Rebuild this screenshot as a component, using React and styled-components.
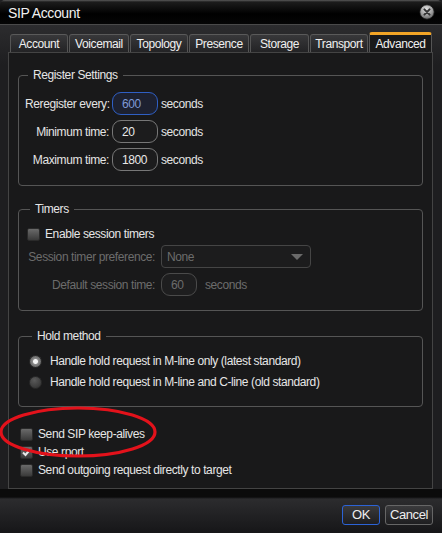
import styled, { createGlobalStyle } from "styled-components";

const Global = createGlobalStyle`
  html, body {
    margin: 0;
    padding: 0;
    background: #000;
  }
  body {
    font-family: "Liberation Sans", Arial, sans-serif;
    font-size: 12px;
    line-height: 14px;
    letter-spacing: -0.4px;
  }
`;

const tabs = [
  { label: "Account", width: 58 },
  { label: "Voicemail", width: 60 },
  { label: "Topology", width: 58 },
  { label: "Presence", width: 60 },
  { label: "Storage", width: 59 },
  { label: "Transport", width: 58 },
  { label: "Advanced", width: 63, active: true },
];

const CloseIcon = () => (
  <svg width="16" height="16" viewBox="0 0 16 16">
    <defs>
      <radialGradient id="cg" cx="0.45" cy="0.3" r="0.75">
        <stop offset="0" stopColor="#e2e2e2" />
        <stop offset="0.6" stopColor="#9a9a9a" />
        <stop offset="1" stopColor="#5a5a5a" />
      </radialGradient>
    </defs>
    <circle cx="8" cy="8" r="7.2" fill="url(#cg)" stroke="#1a1a1a" strokeWidth="0.8" />
    <path d="M5.4 5.4 L10.6 10.6 M10.6 5.4 L5.4 10.6" stroke="#333" strokeWidth="2" strokeLinecap="round" />
  </svg>
);

const Checkbox = ({ checked }) => (
  <Box>
    {checked && (
      <svg width="11" height="11" viewBox="0 0 11 11">
        <path d="M2 5.5 L4.5 8 L9 2.5" stroke="#e8e8e8" strokeWidth="2" fill="none" />
      </svg>
    )}
  </Box>
);

export default function App() {
  return (
    <>
      <Global />
      <Dialog>
        <TitleBar>
          <Title>SIP Account</Title>
          <CloseIcon />
        </TitleBar>
        <Body>
          <TabRow>
            {tabs.map((t) => (
              <Tab key={t.label} $w={t.width} $active={t.active}>
                {t.label}
              </Tab>
            ))}
          </TabRow>
          <Panel>
            <Group>
              <Legend>Register Settings</Legend>
              <FieldList>
                <FieldRow>
                  <FieldLabel $w={84}>Reregister every:</FieldLabel>
                  <Input $w={46} $focus>600</Input>
                  <Unit>seconds</Unit>
                </FieldRow>
                <FieldRow>
                  <FieldLabel $w={84}>Minimum time:</FieldLabel>
                  <Input $w={46}>20</Input>
                  <Unit>seconds</Unit>
                </FieldRow>
                <FieldRow>
                  <FieldLabel $w={84}>Maximum time:</FieldLabel>
                  <Input $w={46}>1800</Input>
                  <Unit>seconds</Unit>
                </FieldRow>
              </FieldList>
            </Group>

            <Group $top={16} $pt={10} $pl={8}>
              <Legend>Timers</Legend>
              <CheckRow>
                <Checkbox />
                <span>Enable session timers</span>
              </CheckRow>
              <FieldList $top={3} $gap={5}>
                <FieldRow $gap={6}>
                  <FieldLabel $w={128} $disabled>Session timer preference:</FieldLabel>
                  <Select>
                    <span>None</span>
                    <Caret />
                  </Select>
                </FieldRow>
                <FieldRow $gap={6}>
                  <FieldLabel $w={128} $disabled>Default session time:</FieldLabel>
                  <Input $w={36} $disabled>60</Input>
                  <Unit $disabled $gap={2}>seconds</Unit>
                </FieldRow>
              </FieldList>
            </Group>

            <Group $top={18} $pt={10} $pb={16} $pl={10}>
              <Legend>Hold method</Legend>
              <RadioList>
                <CheckRow>
                  <Radio $checked />
                  <RadioText>Handle hold request in M-line only (latest standard)</RadioText>
                </CheckRow>
                <CheckRow>
                  <Radio />
                  <RadioText>Handle hold request in M-line and C-line (old standard)</RadioText>
                </CheckRow>
              </RadioList>
            </Group>

            <Options>
              <CheckRow>
                <Checkbox />
                <span>Send SIP keep-alives</span>
              </CheckRow>
              <CheckRow>
                <Checkbox checked />
                <span>Use rport</span>
              </CheckRow>
              <CheckRow>
                <Checkbox />
                <span>Send outgoing request directly to target</span>
              </CheckRow>
              <Ellipse width="160" height="56" viewBox="0 0 160 56">
                <ellipse cx="80" cy="28" rx="77" ry="24" fill="none" stroke="#e3121b" strokeWidth="3.2" />
              </Ellipse>
            </Options>
          </Panel>
        </Body>
        <Footer>
          <Button $primary $w={38}>OK</Button>
          <Button $w={48}>Cancel</Button>
        </Footer>
      </Dialog>
    </>
  );
}

const Dialog = styled.div`
  width: 442px;
  height: 533px;
  display: flex;
  flex-direction: column;
  background: #202022;
  color: #e4e4e4;
  overflow: hidden;
`;

const TitleBar = styled.div`
  height: 24px;
  display: flex;
  align-items: center;
  justify-content: space-between;
  padding: 0 7px 0 8px;
  background: linear-gradient(#5a5a5a 0, #1c1c1c 2px, #000 14px, #050505 100%);
  border-bottom: 1px solid #4a4a4a;
  border-radius: 5px 5px 0 0;
`;

const Title = styled.div`
  font-size: 14px;
  color: #f0f0f0;
  padding-top: 1px;
`;

const Body = styled.div`
  flex: 1;
  display: flex;
  flex-direction: column;
  padding: 7px 9px 0 8px;
  background: linear-gradient(#2c2c2e 0, #1e1e20 40px, #1e1e20 100%);
`;

const TabRow = styled.div`
  display: flex;
  align-items: flex-end;
  gap: 1px;
  height: 20px;
  padding-left: 2px;
`;

const Tab = styled.div`
  width: ${(p) => p.$w}px;
  height: ${(p) => (p.$active ? 20 : 18)}px;
  box-sizing: border-box;
  display: flex;
  align-items: center;
  justify-content: center;
  padding-top: ${(p) => (p.$active ? 0 : 1)}px;
  color: #f0f0f0;
  border: 1px solid #555;
  border-top: ${(p) => (p.$active ? "3px solid #f3a526" : "1px solid #5a5a5a")};
  border-bottom: none;
  border-radius: 3px 3px 0 0;
  background: ${(p) =>
    p.$active ? "#19191a" : "linear-gradient(#38383a, #232325)"};
`;

const Panel = styled.div`
  height: 437px;
  box-sizing: border-box;
  border: 1px solid #444;
  background: #19191a;
  padding: 15px 9px 0;
`;

const Group = styled.fieldset`
  margin: ${(p) => p.$top || 0}px 0 0;
  padding: ${(p) => p.$pt ?? 10}px 6px ${(p) => p.$pb ?? 14}px ${(p) => p.$pl ?? 6}px;
  border: 1px solid #555;
  border-radius: 4px;
  min-width: 0;
`;

const Legend = styled.legend`
  padding: 0 5px;
  margin-left: 3px;
  color: #e6e6e6;
`;

const FieldList = styled.div`
  display: flex;
  flex-direction: column;
  gap: ${(p) => p.$gap ?? 5}px;
  margin-top: ${(p) => p.$top || 0}px;
`;

const FieldRow = styled.div`
  display: flex;
  align-items: center;
  gap: ${(p) => p.$gap ?? 3}px;
`;

const FieldLabel = styled.div`
  width: ${(p) => p.$w}px;
  flex: none;
  text-align: right;
  white-space: nowrap;
  color: ${(p) => (p.$disabled ? "#6c6c6c" : "#e4e4e4")};
`;

const Input = styled.div`
  width: ${(p) => p.$w}px;
  height: 23px;
  box-sizing: border-box;
  display: flex;
  align-items: center;
  padding-left: 9px;
  border-radius: 9px;
  border: 1px solid ${(p) => (p.$focus ? "#2f5fc4" : p.$disabled ? "#4a4a4a" : "#777")};
  background: ${(p) => (p.$focus ? "#1d2130" : p.$disabled ? "#1e1e1f" : "#1c1c1d")};
  color: ${(p) => (p.$focus ? "#7f9ad6" : p.$disabled ? "#6c6c6c" : "#e8e8e8")};
`;

const Unit = styled.div`
  padding-left: ${(p) => p.$gap || 0}px;
  color: ${(p) => (p.$disabled ? "#6c6c6c" : "#e4e4e4")};
`;

const Select = styled.div`
  width: 150px;
  height: 23px;
  box-sizing: border-box;
  display: flex;
  align-items: center;
  justify-content: space-between;
  padding: 0 7px 0 5px;
  border: 1px solid #454545;
  border-radius: 4px;
  background: #1c1c1d;
  color: #6c6c6c;
`;

const Caret = styled.span`
  width: 0;
  height: 0;
  border-left: 6px solid transparent;
  border-right: 6px solid transparent;
  border-top: 6px solid #6a6a6a;
`;

const CheckRow = styled.div`
  display: flex;
  align-items: center;
  gap: 5px;
  height: 16px;
  color: #e6e6e6;
  white-space: nowrap;
`;

const Box = styled.div`
  width: 13px;
  height: 13px;
  box-sizing: border-box;
  display: flex;
  align-items: center;
  justify-content: center;
  border: 1px solid #2a2a2a;
  border-radius: 2px;
  background: linear-gradient(#6a6a6a, #3a3a3a);
`;

const RadioList = styled.div`
  display: flex;
  flex-direction: column;
  gap: 5px;
`;

const Radio = styled.div`
  width: 13px;
  height: 13px;
  box-sizing: border-box;
  border-radius: 50%;
  border: 1px solid #2a2a2a;
  background: ${(p) =>
    p.$checked
      ? "radial-gradient(circle, #f4f4f4 0, #f4f4f4 2px, #8a8a8a 3px, #4a4a4a 100%)"
      : "radial-gradient(circle at 40% 30%, #5a5a5a, #2e2e2e)"};
`;

const RadioText = styled.span`
  padding-left: 3px;
`;

const Options = styled.div`
  position: relative;
  display: flex;
  flex-direction: column;
  gap: 2px;
  margin-top: 19px;
  padding-left: 2px;
`;

const Ellipse = styled.svg`
  position: absolute;
  left: -20px;
  top: -22px;
  pointer-events: none;
`;

const Footer = styled.div`
  height: 44px;
  display: flex;
  align-items: center;
  justify-content: flex-end;
  gap: 5px;
  padding: 0 9px 0 0;
  box-sizing: border-box;
  background: linear-gradient(#0b0b0b 0, #0b0b0b 8px, #2c2c2e 10px, #161618 100%);
`;

const Button = styled.div`
  width: ${(p) => p.$w}px;
  height: 20px;
  box-sizing: border-box;
  display: flex;
  align-items: center;
  justify-content: center;
  font-size: 13px;
  color: #eee;
  border-radius: 3px;
  border: 1px solid ${(p) => (p.$primary ? "#2c63d6" : "#666")};
  background: linear-gradient(#3a3a3c, #1e1e20);
  margin-top: 7px;
`;
